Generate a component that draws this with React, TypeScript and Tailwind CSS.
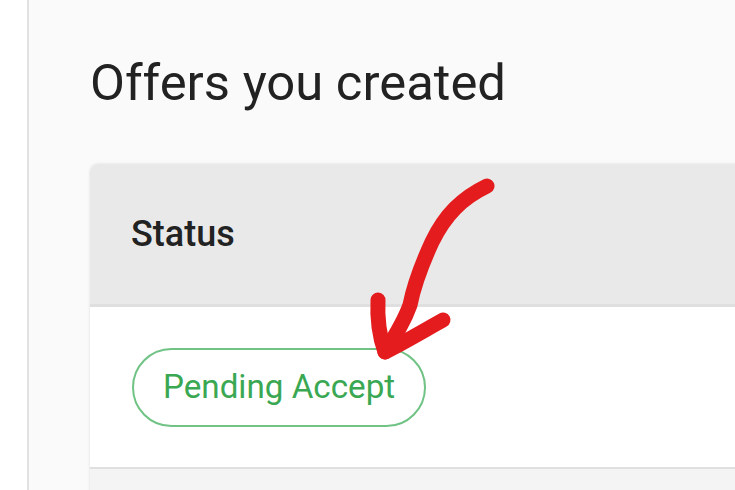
import React from "react";

export default function App() {
  return (
    <div
      className="relative flex h-[490px] w-[735px] overflow-hidden bg-white"
      style={{ fontFamily: "Roboto, 'Noto Sans', Arial, sans-serif" }}
    >
      <div className="w-[29px] shrink-0 border-r-2 border-[#e2e2e2] bg-white" />
      <main className="flex-1 bg-[#fafafa] pl-[61px]">
        <h1 className="mt-[53px] text-[50.8px] font-normal leading-[60px] text-[#222222]">
          Offers you created
        </h1>
        <div className="mt-[51px] w-[700px] overflow-hidden rounded-tl-[8px] bg-white shadow-[0_0_3px_rgba(0,0,0,0.12)]">
          <div className="flex h-[143px] items-center border-b-[3px] border-[#dfdfdf] bg-[#e9e9e9] pl-[41px]">
            <span className="text-[36px] font-medium text-[#222222]">Status</span>
          </div>
          <div className="flex h-[162px] items-center border-b-2 border-[#e0e0e0] bg-white pl-[42px]">
            <span className="flex h-[79px] items-center rounded-full border-2 border-[#70c385] px-[29px] text-[33.2px] text-[#3aa853]">
              Pending Accept
            </span>
          </div>
          <div className="h-[40px] bg-[#f4f4f4]" />
        </div>
      </main>
      <svg
        className="pointer-events-none absolute left-0 top-0"
        width="735"
        height="490"
        viewBox="0 0 735 490"
      >
        <g
          fill="none"
          stroke="#e41c1e"
          strokeWidth="15"
          strokeLinecap="round"
          strokeLinejoin="round"
        >
          <path d="M487 186 C462 198 445 215 432 242 C420 268 414 285 410 305 C404 322 395 336 385 352" />
          <path d="M378 300 C377 320 380 338 385 352 C405 342 425 330 443 320" />
        </g>
      </svg>
    </div>
  );
}
